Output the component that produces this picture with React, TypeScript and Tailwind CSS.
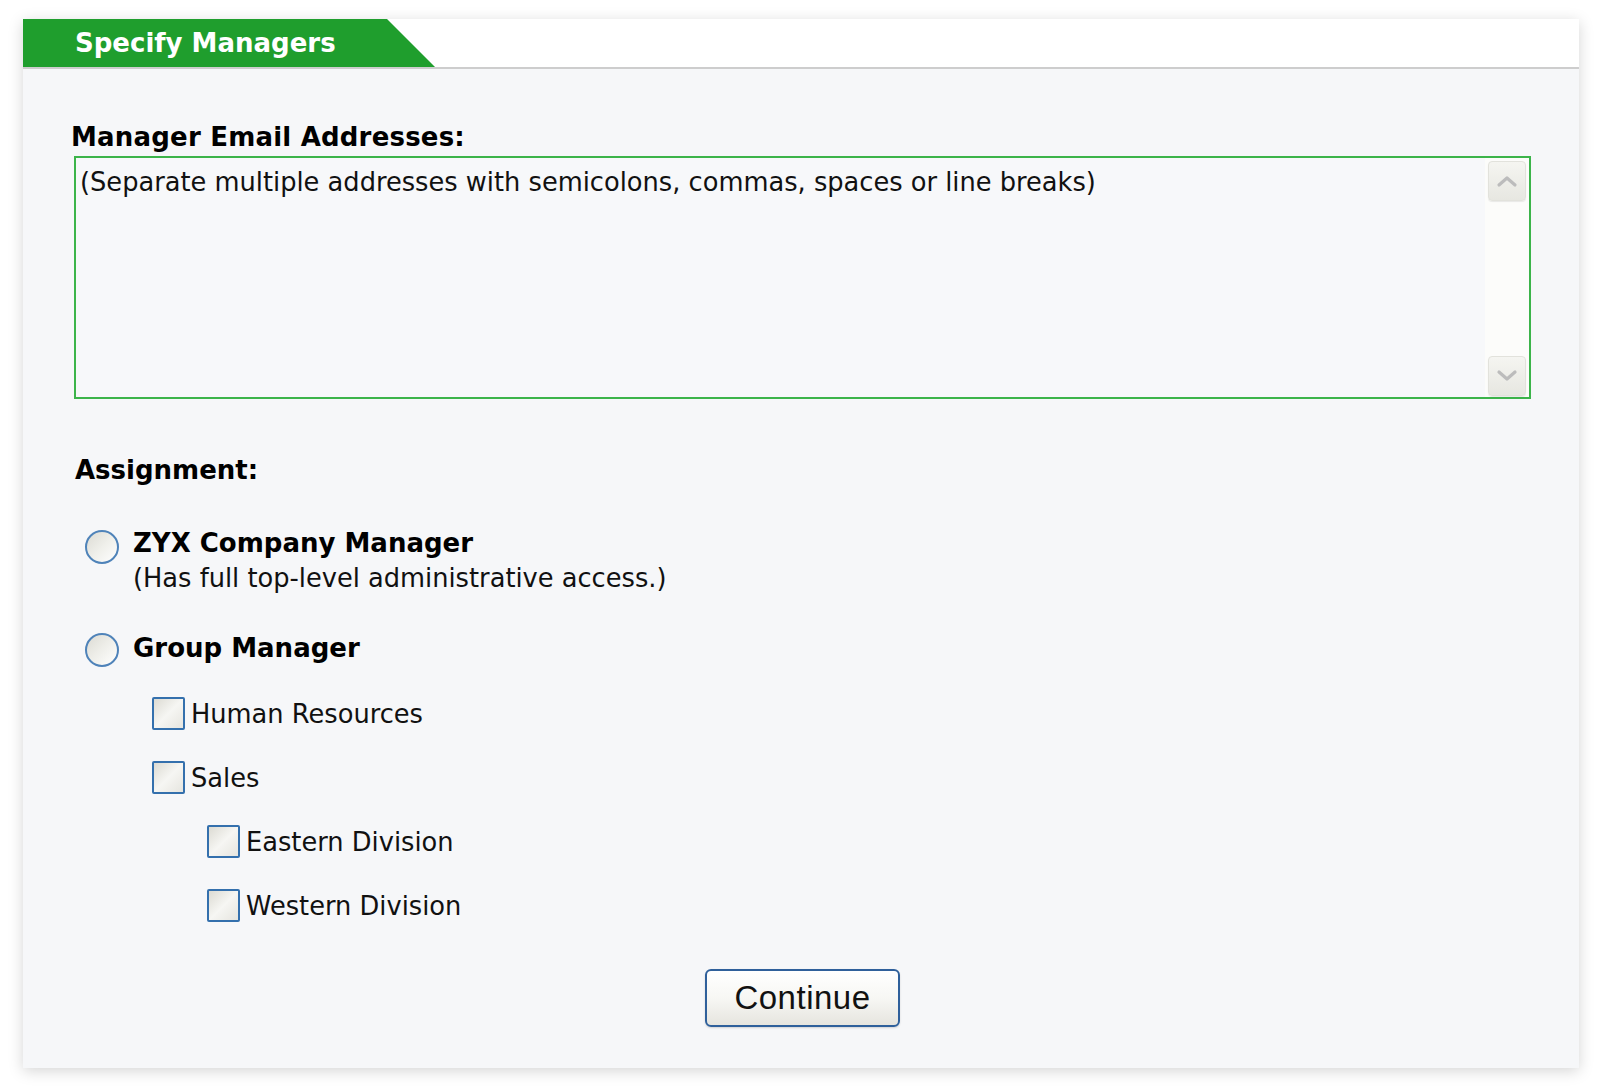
import React from "react";

function Radio({ className = "" }: { className?: string }) {
  return (
    <div
      className={`w-[34px] h-[34px] shrink-0 rounded-full border-2 border-[#4f83b9] bg-gradient-to-br from-[#dcdbd4] via-[#efefea] to-white ${className}`}
    />
  );
}

function Check() {
  return (
    <div className="w-[33px] h-[33px] shrink-0 rounded-[2px] border-2 border-[#3470ad] bg-gradient-to-br from-[#dcdbd3] via-[#f6f6f3] to-[#e6e5df]" />
  );
}

function CheckRow({ label, indent }: { label: string; indent: string }) {
  return (
    <div className={`flex items-center gap-[6px] h-[33px] ${indent}`}>
      <Check />
      <span className="text-[25.7px] leading-[30px] text-[#111]">{label}</span>
    </div>
  );
}

function Chevron({ up }: { up?: boolean }) {
  return (
    <svg width="22" height="14" viewBox="0 0 22 14">
      <polyline
        points={up ? "3,11 11,4 19,11" : "3,3 11,10 19,3"}
        fill="none"
        stroke="#bcbcbc"
        strokeWidth="3.2"
        strokeLinecap="round"
        strokeLinejoin="round"
      />
    </svg>
  );
}

export default function App() {
  return (
    <div className="min-h-screen bg-white pt-[19px] px-[23px] font-['DejaVu_Sans',sans-serif] text-black">
      <div className="w-[1556px] bg-[#f6f7f9] shadow-[0_3px_14px_rgba(0,0,0,0.17)]">
        {/* Header */}
        <div className="h-[50px] bg-white border-b-2 border-[#cdcdcd]">
          <div className="w-[412px] h-full bg-[#1f9e2d] [clip-path:polygon(0_0,364px_0,412px_100%,0_100%)] flex items-center pl-[52px]">
            <span className="text-white font-bold text-[26px] leading-[30px]">Specify Managers</span>
          </div>
        </div>

        {/* Body */}
        <div className="flex flex-col pl-[51px] pr-[48px] pt-[53px] pb-[41px]">
          <div className="-ml-[3px] font-bold text-[26px] leading-[30px] tracking-[0.2px]">
            Manager Email Addresses:
          </div>

          <div className="mt-[4px] h-[243px] border-2 border-[#3cb44a] bg-[#f7f8fa] flex">
            <div className="flex-1 pl-[4px] pt-[9px] text-[25.7px] leading-[30px] text-[#111]">
              (Separate multiple addresses with semicolons, commas, spaces or line breaks)
            </div>
            <div className="w-[44px] bg-[#fcfcfa] flex flex-col items-center justify-between pt-[3px] pb-[1px]">
              <div className="w-[38px] h-[40px] rounded-[4px] border border-[#e2e2dc] bg-gradient-to-b from-[#f5f5f1] to-[#e7e7e1] shadow-[0_1px_1px_rgba(0,0,0,0.08)] flex items-center justify-center">
                <Chevron up />
              </div>
              <div className="w-[38px] h-[40px] rounded-[4px] border border-[#e2e2dc] bg-gradient-to-b from-[#f5f5f1] to-[#e7e7e1] shadow-[0_1px_1px_rgba(0,0,0,0.08)] flex items-center justify-center">
                <Chevron />
              </div>
            </div>
          </div>

          <div className="mt-[56px] ml-[1px] font-bold text-[26px] leading-[30px]">Assignment:</div>

          <div className="mt-[43px] ml-[11px] flex items-start gap-[14px]">
            <Radio className="mt-[2px]" />
            <div className="flex flex-col gap-[5px]">
              <span className="font-bold text-[26px] leading-[30px]">ZYX Company Manager</span>
              <span className="text-[25.7px] leading-[30px] text-[#111]">
                (Has full top-level administrative access.)
              </span>
            </div>
          </div>

          <div className="mt-[40px] ml-[11px] flex items-start gap-[14px]">
            <Radio />
            <span className="font-bold text-[26px] leading-[30px]">Group Manager</span>
          </div>

          <div className="mt-[30px] flex flex-col gap-[31px]">
            <CheckRow label="Human Resources" indent="ml-[78px]" />
            <CheckRow label="Sales" indent="ml-[78px]" />
            <CheckRow label="Eastern Division" indent="ml-[133px]" />
            <CheckRow label="Western Division" indent="ml-[133px]" />
          </div>

          <button className="mt-[47px] self-center w-[195px] h-[58px] rounded-[6px] border-2 border-[#2f609b] bg-gradient-to-b from-white via-[#f7f7f4] to-[#e6e5df] shadow-[0_1px_2px_rgba(0,0,0,0.15)] flex items-center justify-center">
            <span className="font-['Liberation_Sans',sans-serif] text-[33px] leading-[36px] text-[#111] tracking-[0.5px]">
              Continue
            </span>
          </button>
        </div>
      </div>
    </div>
  );
}
